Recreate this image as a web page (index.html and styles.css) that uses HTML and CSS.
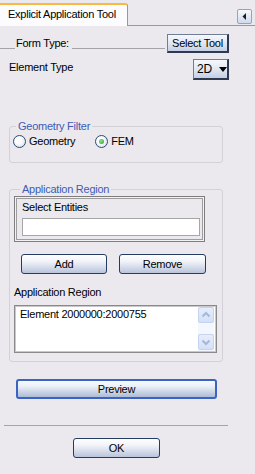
FILE: index.html
```html
<!DOCTYPE html>
<html lang="en">

<head>
    <meta charset="UTF-8">
    <meta name="viewport" content="width=device-width, initial-scale=1.0">
    <title>Explicit Application Tool</title>
    <link rel="stylesheet" href="styles.css">
</head>

<body>
    <div class="tabbar">
        <div class="tab">Explicit Application Tool</div>
        <div class="tab-rest">
            <button class="collapse-button">
                <svg width="5" height="7" viewBox="0 0 5 7"><path d="M4 0 L0.5 3.5 L4 7 Z" fill="#1e1e1e" /></svg>
            </button>
        </div>
    </div>

    <div class="form-row">
        <span class="rule rule-short"></span>
        <span class="form-label">Form Type:</span>
        <span class="rule rule-long"></span>
        <button class="tool-button select-tool">Select Tool</button>
    </div>

    <div class="element-row">
        <span class="element-label">Element Type</span>
        <button class="tool-button drop-button">
            <span>2D</span>
            <svg width="8" height="5" viewBox="0 0 8 5"><path d="M0 0 H8 L4 5 Z" fill="#000" /></svg>
        </button>
    </div>

    <fieldset class="group geometry-group">
        <legend>Geometry Filter</legend>
        <div class="radio-row">
            <label class="radio"><span class="radio-dot"></span>Geometry</label>
            <label class="radio checked"><span class="radio-dot"></span>FEM</label>
        </div>
    </fieldset>

    <fieldset class="group region-group">
        <legend>Application Region</legend>
        <div class="select-panel">
            <div class="panel-title">Select Entities</div>
            <input type="text" class="entity-input">
        </div>
        <div class="button-row">
            <button class="btn add-button">Add</button>
            <button class="btn remove-button">Remove</button>
        </div>
        <div class="list-label">Application Region</div>
        <div class="listbox">
            <div class="list-item">Element 2000000:2000755</div>
            <div class="scrollbar">
                <span class="scroll-button">
                    <svg width="14" height="14" viewBox="0 0 14 14"><path d="M3.5 8.5 L7 5 L10.5 8.5" fill="none" stroke="#a7b7d6" stroke-width="2" /></svg>
                </span>
                <span class="scroll-button">
                    <svg width="14" height="14" viewBox="0 0 14 14"><path d="M3.5 5.5 L7 9 L10.5 5.5" fill="none" stroke="#a7b7d6" stroke-width="2" /></svg>
                </span>
            </div>
        </div>
    </fieldset>

    <button class="btn preview-button">Preview</button>
    <div class="separator"></div>
    <button class="btn ok-button">OK</button>
</body>

</html>
```

FILE: styles.css
```css
body {
    margin: 0;
    width: 255px;
    height: 474px;
    background-color: #ebe9ed;
    font-family: 'Liberation Sans', Arial, sans-serif;
    font-size: 11px;
    letter-spacing: -0.25px;
    color: #000;
    overflow: hidden;
}

button {
    font-family: inherit;
    font-size: 11px;
    letter-spacing: -0.25px;
    color: #000;
    padding: 0;
    box-sizing: border-box;
    cursor: pointer;
}

/* tab strip */
.tabbar {
    display: flex;
    height: 26px;
}

.tab {
    box-sizing: border-box;
    width: 128px;
    height: 23px;
    margin-top: 3px;
    padding-left: 8px;
    line-height: 18px;
    background-color: #fcfcfe;
    border-top: 2px solid #f9b940;
    border-right: 1px solid #919b9c;
    border-top-right-radius: 3px;
}

.tab-rest {
    flex: 1;
    display: flex;
    justify-content: flex-end;
    align-items: flex-start;
    box-sizing: border-box;
    height: 26px;
    border-bottom: 1px solid #919b9c;
}

.collapse-button {
    width: 15px;
    height: 15px;
    margin-top: 9px;
    margin-right: 3px;
    border: 1px solid #8ea4c8;
    border-radius: 2px;
    background: linear-gradient(#f7f9fd, #cfdaee);
    display: flex;
    justify-content: center;
    align-items: center;
}

/* form type row */
.form-row {
    display: flex;
    align-items: flex-start;
    height: 19px;
    margin-top: 8px;
    padding-right: 26px;
}

.rule {
    height: 1px;
    margin-top: 14px;
    background-color: #a3a3a8;
}

.rule-short {
    width: 15px;
}

.rule-long {
    flex: 1;
    margin-left: 3px;
    margin-right: 2px;
}

.form-label {
    margin-left: 1px;
    line-height: 18px;
}

.tool-button {
    height: 19px;
    border: 1px solid #6f7d96;
    border-right: 2px solid #2d3a52;
    border-bottom: 2px solid #2d3a52;
    background: linear-gradient(#f6f8fc, #dfe6f2 55%, #c3cfe3);
}

.select-tool {
    width: 62px;
}

.element-row {
    display: flex;
    justify-content: space-between;
    align-items: flex-start;
    height: 21px;
    margin-top: 6px;
    padding-left: 9px;
    padding-right: 26px;
}

.element-label {
    line-height: 16px;
}

.drop-button {
    width: 36px;
    height: 21px;
    display: flex;
    align-items: center;
    padding-left: 3px;
    font-size: 12px;
}

.drop-button svg {
    margin-left: 7px;
}

/* group boxes */
.group {
    margin: 0 32px 0 9px;
    padding: 0;
    border: 1px solid #d3d1d7;
    border-radius: 3px;
    min-width: 0;
}

.group legend {
    margin-left: 6px;
    padding: 0 2px;
    line-height: 13px;
    color: #3d5cb5;
}

.geometry-group {
    margin-top: 40px;
    padding-bottom: 13px;
}

.radio-row {
    display: flex;
    gap: 20px;
    margin-top: 1px;
    padding-left: 3px;
}

.radio {
    display: flex;
    align-items: center;
    gap: 3px;
    line-height: 15px;
}

.radio-dot {
    box-sizing: border-box;
    width: 13px;
    height: 13px;
    border: 1px solid #2b4c74;
    border-radius: 50%;
    background: radial-gradient(circle at 40% 40%, #ffffff 30%, #d4d4d8 100%);
    display: flex;
    justify-content: center;
    align-items: center;
}

.checked .radio-dot::after {
    content: '';
    width: 5px;
    height: 5px;
    border-radius: 50%;
    background: radial-gradient(circle at 40% 40%, #8ee08e, #21a121);
}

.region-group {
    margin-top: 20px;
    padding: 0 5px 8px 4px;
}

.select-panel {
    width: 191px;
    box-sizing: border-box;
    border: 1px solid #7e7e7e;
    box-shadow: inset 0 0 0 1px #f2f2f2, inset 0 0 0 2px #9d9d9d;
    padding: 2px 5px 5px 8px;
}

.panel-title {
    padding-top: 1px;
    margin-left: -1px;
    line-height: 15px;
}

.entity-input {
    display: block;
    box-sizing: border-box;
    width: 178px;
    height: 18px;
    margin-top: 3px;
    margin-left: -1px;
    border: 1px solid #a6a6a6;
    background-color: #fff;
}

.button-row {
    display: flex;
    gap: 12px;
    margin-top: 12px;
    padding-left: 7px;
}

.btn {
    height: 20px;
    border: 1px solid #243b63;
    border-radius: 3px;
    background: linear-gradient(#ffffff, #f1f3f8 35%, #b9c5dc);
}

.add-button {
    width: 86px;
}

.remove-button {
    width: 87px;
}

.list-label {
    margin-top: 11px;
    line-height: 14px;
}

.listbox {
    display: flex;
    justify-content: space-between;
    height: 48px;
    box-sizing: border-box;
    margin-top: 6px;
    border: 1px solid #8a8a8a;
    box-shadow: inset 0 0 0 1px #c9c9c9;
    background-color: #fff;
    padding: 1px;
}

.list-item {
    padding-left: 4px;
    line-height: 14px;
}

.scrollbar {
    display: flex;
    flex-direction: column;
    justify-content: space-between;
    width: 16px;
    margin-right: 1px;
    padding-bottom: 1px;
    background-color: #f4f7fd;
}

.scroll-button {
    box-sizing: border-box;
    height: 16px;
    border: 1px solid #c4d3f0;
    border-radius: 2px;
    background: linear-gradient(#e6eefc, #d3e0f8);
    display: flex;
    justify-content: center;
    align-items: center;
}

/* bottom buttons */
.preview-button {
    display: block;
    width: 201px;
    margin: 17px 0 0 16px;
    border: 2px solid #3a63c4;
    background: linear-gradient(#f8fcff, #e9eff7 35%, #adbbd5);
}

.separator {
    width: 224px;
    height: 1px;
    margin: 26px 0 0 4px;
    background-color: #a4a3a8;
}

.ok-button {
    display: block;
    width: 87px;
    margin: 12px 0 0 73px;
}
```
